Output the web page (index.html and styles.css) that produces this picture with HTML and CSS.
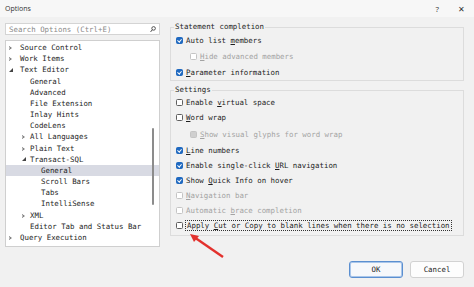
FILE: index.html
```html
<!DOCTYPE html>
<html lang="en">
<head>
  <meta charset="UTF-8">
  <title>Options</title>
  <link rel="stylesheet" href="styles.css">
</head>
<body>
  <div class="dialog">
    <div class="titlebar">
      <span class="title">Options</span>
      <span class="help">?</span>
      <span class="close">&#x2715;</span>
    </div>

    <div class="content">
      <div class="left">
        <div class="search">
          <span>Search Options (Ctrl+E)</span>
          <svg class="search-icon" width="6" height="7" viewBox="0 0 6 7">
            <circle cx="3.6" cy="2.4" r="1.8" fill="none" stroke="#444" stroke-width="0.9"/>
            <line x1="2.4" y1="3.7" x2="0.6" y2="5.9" stroke="#444" stroke-width="1"/>
          </svg>
        </div>
        <div class="tree">
          <div class="node l1"><i class="arr closed"></i>Source Control</div>
          <div class="node l1"><i class="arr closed"></i>Work Items</div>
          <div class="node l1"><i class="arr open"></i>Text Editor</div>
          <div class="node l2">General</div>
          <div class="node l2">Advanced</div>
          <div class="node l2">File Extension</div>
          <div class="node l2">Inlay Hints</div>
          <div class="node l2">CodeLens</div>
          <div class="node l2"><i class="arr closed"></i>All Languages</div>
          <div class="node l2"><i class="arr closed"></i>Plain Text</div>
          <div class="node l2"><i class="arr open"></i>Transact-SQL</div>
          <div class="node l3 selected">General</div>
          <div class="node l3">Scroll Bars</div>
          <div class="node l3">Tabs</div>
          <div class="node l3">IntelliSense</div>
          <div class="node l2"><i class="arr closed"></i>XML</div>
          <div class="node l2">Editor Tab and Status Bar</div>
          <div class="node l1"><i class="arr closed"></i>Query Execution</div>
          <div class="scrollbar"></div>
        </div>
      </div>

      <div class="right">
        <fieldset class="group">
          <legend>Statement completion</legend>
          <div class="opt"><i class="cb checked"></i><span>Auto list <u>m</u>embers</span></div>
          <div class="opt sub disabled"><i class="cb"></i><span><u>H</u>ide advanced members</span></div>
          <div class="opt"><i class="cb checked"></i><span><u>P</u>arameter information</span></div>
        </fieldset>

        <fieldset class="group settings">
          <legend>Settings</legend>
          <div class="opt"><i class="cb"></i><span>Enable <u>v</u>irtual space</span></div>
          <div class="opt"><i class="cb"></i><span><u>W</u>ord wrap</span></div>
          <div class="opt sub disabled tall"><i class="cb grey"></i><span><u>S</u>how visual glyphs for word wrap</span></div>
          <div class="opt"><i class="cb checked"></i><span><u>L</u>ine numbers</span></div>
          <div class="opt"><i class="cb checked"></i><span>Enable single-click <u>U</u>RL navigation</span></div>
          <div class="opt"><i class="cb checked"></i><span>Show <u>Q</u>uick Info on hover</span></div>
          <div class="opt disabled"><i class="cb"></i><span><u>N</u>avigation bar</span></div>
          <div class="opt disabled"><i class="cb"></i><span>Automatic <u>b</u>race completion</span></div>
          <div class="opt"><i class="cb"></i><span class="focus">Apply <u>C</u>ut or Copy to blank lines when there is no selection</span></div>
        </fieldset>
      </div>
    </div>

    <div class="footer">
      <button class="btn default">OK</button>
      <button class="btn">Cancel</button>
    </div>

    <svg class="arrow" width="40" height="30" viewBox="0 0 40 30">
      <line x1="35" y1="24" x2="6" y2="4" stroke="#e3312d" stroke-width="2.4"/>
      <polygon points="2,1 11,3 6,9" fill="#e3312d"/>
    </svg>
  </div>
</body>
</html>
```

FILE: styles.css
```css
body {
  margin: 0;
  background: #f0f0f0;
  font-family: "DejaVu Sans Mono", "Liberation Mono", monospace;
  font-size: 7.4px;
  color: #1e1e1e;
}
.dialog {
  position: relative;
  width: 474px;
  height: 287px;
  display: flex;
  flex-direction: column;
  background: #f1f1f1;
}
.titlebar {
  height: 17px;
  display: flex;
  align-items: center;
  background: #f7f7f7;
  padding: 0 9px 0 5px;
  font-family: "Open Sans", "Liberation Sans", sans-serif;
  font-size: 7px;
  color: #333;
}
.title {
  flex: 1;
}
.help {
  margin-right: 19px;
  font-size: 8px;
}
.close {
  font-size: 8px;
}
.content {
  display: flex;
  padding-left: 5px;
  gap: 10px;
}
.left {
  width: 155px;
  padding-top: 6px;
}
.search {
  height: 12px;
  box-sizing: border-box;
  border: 1px solid #d4d4d4;
  background: #fff;
  display: flex;
  align-items: center;
  padding: 0 3px 0 3px;
  color: #8a8a8a;
}
.search span {
  flex: 1;
}
.tree {
  position: relative;
  margin-top: 5px;
  height: 207px;
  box-sizing: border-box;
  border: 1px solid #cfcfcf;
  background: #fff;
  padding-top: 1px;
  overflow: hidden;
}
.node {
  height: 11.18px;
  line-height: 11.18px;
  white-space: nowrap;
  position: relative;
  width: 142px;
}
.l1 { padding-left: 14px; }
.l2 { padding-left: 24px; }
.l3 { padding-left: 35px; }
.selected {
  background: #d8dae3;
}
.arr {
  position: absolute;
  top: 4px;
  width: 0;
  height: 0;
}
.l1 .arr { left: 3px; }
.l2 .arr { left: 16px; }
.arr.closed {
  border-left: 3px solid #777;
  border-top: 2px solid transparent;
  border-bottom: 2px solid transparent;
}
.arr.closed::after {
  content: "";
  position: absolute;
  left: -2.6px;
  top: -1px;
  border-left: 1.7px solid #fff;
  border-top: 1px solid transparent;
  border-bottom: 1px solid transparent;
}
.arr.open {
  top: 3.5px;
  border-right: 4px solid #444;
  border-top: 4px solid transparent;
}
.scrollbar {
  position: absolute;
  right: 5px;
  top: 87px;
  width: 2px;
  height: 77px;
  background: #8c8c8c;
  border-radius: 1px;
}
.right {
  width: 294px;
  padding-top: 5px;
}
.group {
  margin: 0;
  border: 1px solid #dcdcdc;
  padding: 0 0 0 3px;
}
.group legend {
  padding: 0 1px;
  line-height: 10px;
}
.settings {
  margin-top: 4px;
  padding-bottom: 2px;
}
.opt {
  height: 16px;
  display: flex;
  align-items: center;
  white-space: pre;
  padding-left: 2px;
}
.settings .opt {
  height: 15px;
}
.settings .opt.tall {
  height: 17px;
  margin-top: 1px;
}
.opt.sub {
  padding-left: 16px;
}
.opt.disabled {
  color: #a3a3a3;
}
.cb {
  width: 7px;
  height: 7px;
  box-sizing: border-box;
  border: 1px solid #5f5f5f;
  border-radius: 1.5px;
  background: #fff;
  margin-right: 3px;
  flex: none;
  position: relative;
}
.disabled .cb {
  border-color: #c4c4c4;
}
.cb.grey {
  background: #cfcfcf;
  border-color: #c4c4c4;
}
.cb.checked {
  background: #1f69c0;
  border-color: #1f69c0;
}
.cb.checked::after {
  content: "";
  position: absolute;
  left: 1.4px;
  top: 0;
  width: 1.6px;
  height: 3.2px;
  border-right: 1px solid #fff;
  border-bottom: 1px solid #fff;
  transform: rotate(40deg);
}
.focus {
  outline: 1px dotted #333;
  outline-offset: 0;
  padding: 0 1px;
}
.footer {
  margin-top: auto;
  display: flex;
  justify-content: flex-end;
  gap: 7px;
  padding: 0 10px 9px 0;
}
.btn {
  width: 54px;
  height: 17px;
  box-sizing: border-box;
  font-family: inherit;
  font-size: 7.4px;
  color: #1e1e1e;
  background: #fdfdfd;
  border: 1px solid #d2d2d2;
  border-radius: 3px;
  padding: 0;
}
.btn.default {
  border: 1px solid #5b8fd0;
  box-shadow: inset 0 0 0 1px #a9c6ea;
  background: #f6f8fb;
}
.arrow {
  position: absolute;
  left: 188px;
  top: 233px;
}
```
